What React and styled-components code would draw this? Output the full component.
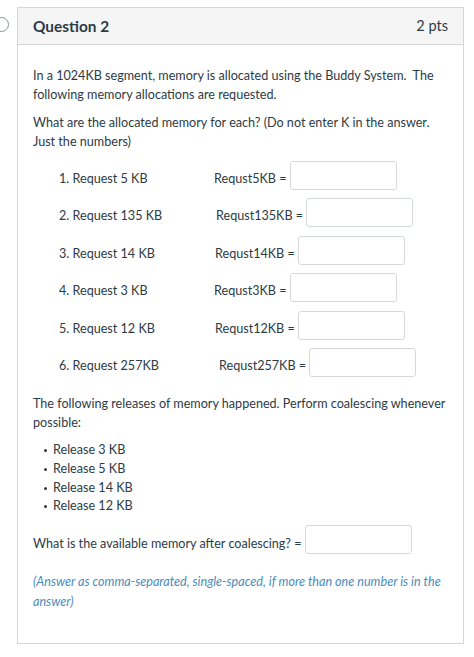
import React from "react";
import styled, { createGlobalStyle } from "styled-components";

const GlobalStyle = createGlobalStyle`
  html, body {
    margin: 0;
    padding: 0;
    background: #fff;
  }
  body {
    font-family: Lato, "Open Sans", sans-serif;
    color: #2d3b45;
  }
`;

const requests = [
  { label: "1. Request 5 KB", name: "Requst5KB", offset: 0 },
  { label: "2. Request 135 KB", name: "Requst135KB", offset: 2 },
  { label: "3. Request 14 KB", name: "Requst14KB", offset: 1 },
  { label: "4. Request 3 KB", name: "Requst3KB", offset: 0 },
  { label: "5. Request 12 KB", name: "Requst12KB", offset: 1 },
  { label: "6. Request 257KB", name: "Requst257KB", offset: 5 },
];

const releases = ["Release 3 KB", "Release 5 KB", "Release 14 KB", "Release 12 KB"];

function App() {
  return (
    <Page>
      <GlobalStyle />
      <Flag />
      <Card>
        <Header>
          <Title>Question 2</Title>
          <Points>2 pts</Points>
        </Header>
        <Body>
          <Para>
            In a 1024KB segment, memory is allocated using the Buddy System.&nbsp; The
            following memory allocations are requested.
          </Para>
          <Para>
            What are the allocated memory for each? (Do not enter K in the answer.
            Just the numbers)
          </Para>
          <RequestTable>
            {requests.map((r) => (
              <RequestRow key={r.name}>
                <RowLabel>{r.label}</RowLabel>
                <AnswerCell $offset={r.offset}>
                  <CellText>{r.name} =</CellText>
                  <AnswerBox />
                </AnswerCell>
              </RequestRow>
            ))}
          </RequestTable>
          <Para>
            The following releases of memory happened. Perform coalescing whenever
            possible:
          </Para>
          <ReleaseList>
            {releases.map((r) => (
              <li key={r}>{r}</li>
            ))}
          </ReleaseList>
          <FinalLine>
            <CellText $drop={1}>What is the available memory after coalescing? =</CellText>
            <AnswerBox />
          </FinalLine>
          <Hint>
            (Answer as comma-separated, single-spaced, if more than one number is in the
            answer)
          </Hint>
        </Body>
      </Card>
    </Page>
  );
}

export default App;

const Page = styled.div`
  position: relative;
  width: 474px;
  height: 657px;
  padding-top: 7px;
  box-sizing: border-box;
  overflow: hidden;
`;

const Flag = styled.div`
  position: absolute;
  left: -6px;
  top: 17px;
  width: 13px;
  height: 13px;
  border: 1.5px solid #8a939a;
  border-radius: 50%;
`;

const Card = styled.div`
  margin-left: 17px;
  width: 447px;
  height: 637px;
  box-sizing: border-box;
  border: 1px solid #d4d7da;
`;

const Header = styled.div`
  height: 35px;
  background: #f5f5f5;
  border-bottom: 1px solid #d4d7da;
  display: flex;
  align-items: center;
  justify-content: space-between;
  padding: 0 15px 1px 15px;
`;

const Title = styled.h2`
  margin: 0;
  font-size: 15.4px;
  font-weight: 700;
  color: #2d3b45;
`;

const Points = styled.span`
  font-size: 14.5px;
  color: #2d3b45;
`;

const Body = styled.div`
  padding: 21px 15px 0 15px;
  font-size: 12.6px;
  line-height: 19px;
`;

const Para = styled.p`
  margin: 0 0 9px 0;
`;

const RequestTable = styled.div`
  display: flex;
  flex-direction: column;
  gap: 8.45px;
  margin: 10px 0 17px 0;
`;

const RequestRow = styled.div`
  display: grid;
  grid-template-columns: 155px 1fr;
  align-items: end;
  height: 29px;
  padding-left: 26px;
`;

const RowLabel = styled.span`
  padding-bottom: 2px;
`;

const AnswerCell = styled.span`
  display: flex;
  align-items: flex-end;
  gap: 3px;
  padding-left: ${(p) => p.$offset}px;
`;

const CellText = styled.span`
  padding-bottom: ${(p) => (p.$drop !== undefined ? p.$drop : 2)}px;
`;

const AnswerBox = styled.span`
  display: inline-block;
  width: 107px;
  height: 29px;
  box-sizing: border-box;
  border: 1px solid #d6d9dc;
  border-radius: 3px;
  background: #fff;
`;

const ReleaseList = styled.ul`
  margin: 0 0 9px 0;
  padding-left: 11px;
  list-style: none;
  line-height: 18.7px;
  li {
    position: relative;
    padding-left: 9px;
  }
  li::before {
    content: "";
    position: absolute;
    left: 0;
    top: 8px;
    width: 3px;
    height: 3px;
    border-radius: 50%;
    background: #2d3b45;
  }
`;

const FinalLine = styled.div`
  display: flex;
  align-items: flex-end;
  gap: 3px;
  margin-bottom: 18px;
`;

const Hint = styled.p`
  margin: 0;
  font-style: italic;
  line-height: 19.7px;
  color: #4a8cbd;
`;
